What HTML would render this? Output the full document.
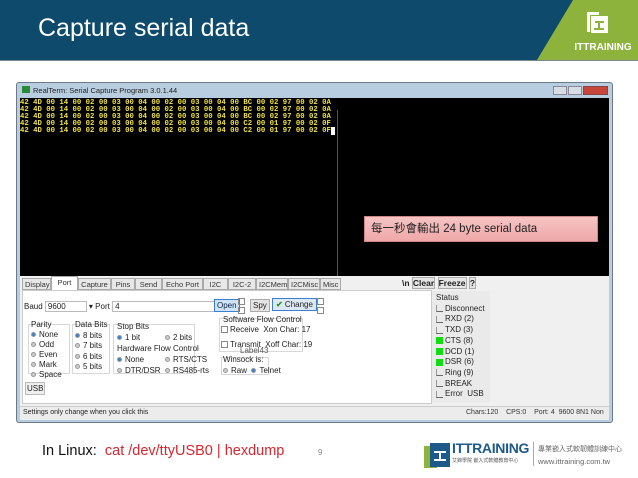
<!DOCTYPE html>
<html><head><meta charset="utf-8"><style>
*{margin:0;padding:0;box-sizing:border-box}
body{width:638px;height:478px;overflow:hidden;background:#fff;font-family:"Liberation Sans",sans-serif;position:relative}
.a{position:absolute}
.s{font-size:8px;color:#222;white-space:nowrap}
.hex{font-family:"Liberation Mono",monospace;font-weight:bold;font-size:7.3px;line-height:7px;color:#f0e040;white-space:pre}
.tab{position:absolute;top:278px;height:12px;font-size:7.5px;color:#333;border:1px solid #aaa;background:#e8e8e8;padding:1px 2px;white-space:nowrap;text-align:center;overflow:hidden}
.rb{display:inline-block;width:5px;height:5px;border-radius:50%;background:#ccc;border:1px solid #999;margin-right:3px;vertical-align:middle}
.rb.on{background:#3a7fd0}
.box{position:absolute;border:1px solid #d8d8d8}
.led{display:inline-block;width:7px;height:7px;border-bottom:1px solid #666;border-left:1px solid #999;margin-right:2px;vertical-align:middle}
.led.g{background:#11dd11;border:none}
</style></head><body>
<div class="a" style="left:0;top:0;width:638px;height:60px;background:#0e4a6b"></div>
<svg class="a" style="left:0;top:0" width="638" height="62"><polygon points="573,0 638,0 638,60 537,60" fill="#8db33d"/><line x1="0" y1="60.5" x2="638" y2="60.5" stroke="#7a8a95" stroke-width="1"/>
<g fill="#fff"><rect x="587" y="12" width="3" height="20"/><rect x="587" y="12" width="12" height="3"/><rect x="591" y="16" width="17" height="17"/></g>
<g fill="#8db33d"><rect x="595" y="21" width="9" height="2"/><rect x="598" y="21" width="2" height="8"/><rect x="594" y="28" width="10" height="2"/></g>
<text x="603" y="50" fill="#fff" font-family="Liberation Sans" font-weight="bold" font-size="10" text-anchor="middle">ITTRAINING</text></svg>
<div class="a" style="left:38px;top:14px;font-size:25px;color:#fff">Capture serial data</div>

<!-- window -->
<div class="a" style="left:16px;top:82px;width:597px;height:341px;background:#b8cde0;border:1px solid #6a7a8a;border-radius:3px"></div>
<div class="a s" style="left:33px;top:86px;font-size:7.5px;color:#222">RealTerm: Serial Capture Program 3.0.1.44</div>
<div class="a" style="left:22px;top:86px;width:8px;height:7px;background:#2a8a3a"></div>
<div class="a" style="left:553px;top:86px;width:14px;height:9px;background:#d8dde4;border:1px solid #889"></div>
<div class="a" style="left:568px;top:86px;width:14px;height:9px;background:#d8dde4;border:1px solid #889"></div>
<div class="a" style="left:583px;top:86px;width:25px;height:9px;background:#c8453a;border:1px solid #844"></div>
<div class="a" style="left:20px;top:98px;width:589px;height:178px;background:#000"></div>
<div class="a" style="left:337px;top:110px;width:1px;height:166px;background:#555"></div>
<div class="a hex" style="left:20px;top:100px">42 4D 00 14 00 02 00 03 00 04 00 02 00 03 00 04 00 BC 00 02 97 00 02 0A
42 4D 00 14 00 02 00 03 00 04 00 02 00 03 00 04 00 BC 00 02 97 00 02 0A
42 4D 00 14 00 02 00 03 00 04 00 02 00 03 00 04 00 BC 00 02 97 00 02 0A
42 4D 00 14 00 02 00 03 00 04 00 02 00 03 00 04 00 C2 00 01 97 00 02 0F
42 4D 00 14 00 02 00 03 00 04 00 02 00 03 00 04 00 C2 00 01 97 00 02 0F<span style="background:#fff"> </span></div>
<div class="a" style="left:364px;top:216px;width:234px;height:26px;background:linear-gradient(#f6c4c4,#f0a8a8);border:1px solid #c88;font-size:11.5px;line-height:24px;padding-left:6px;color:#222;font-family:'Liberation Sans','Noto Sans CJK TC',sans-serif">每一秒會輸出 24 byte serial data</div>

<div class="a" style="left:20px;top:276px;width:589px;height:131px;background:#f0f0f0"></div>
<div class="tab" style="left:22px;width:29px">Display</div>
<div class="tab" style="left:51px;width:27px;background:#fff;top:276px;height:15px;border-bottom:none">Port</div>
<div class="tab" style="left:78px;width:33px">Capture</div>
<div class="tab" style="left:111px;width:24px">Pins</div>
<div class="tab" style="left:135px;width:27px">Send</div>
<div class="tab" style="left:162px;width:41px">Echo Port</div>
<div class="tab" style="left:203px;width:25px">I2C</div>
<div class="tab" style="left:228px;width:28px">I2C-2</div>
<div class="tab" style="left:256px;width:32px">I2CMem</div>
<div class="tab" style="left:288px;width:32px">I2CMisc</div>
<div class="tab" style="left:320px;width:21px">Misc</div>
<div class="a s" style="left:402px;top:278px;font-weight:bold;font-size:8.5px">\n <span style="border:1px solid #aaa;background:#e4e4e4">Clear</span> <span style="border:1px solid #aaa;background:#e4e4e4">Freeze</span> <span style="border:1px solid #aaa;background:#e4e4e4">?</span></div>
<div class="a" style="left:22px;top:290px;width:410px;height:114px;background:#fff;border:1px solid #ccc"></div>

<div class="a s" style="left:24px;top:301px">Baud <span style="border:1px solid #bbb;padding:0 20px 0 2px">9600</span> ▾ Port <span style="border:1px solid #bbb;display:inline-block;width:118px;padding-left:2px">4</span></div>
<div class="a s" style="left:214px;top:299px;border:1px solid #3a7fd0;background:#cfe4f8;padding:1px 2px;color:#124">Open</div>
<div class="a" style="left:238px;top:298px;width:7px;height:7px;border:1px solid #888"></div>
<div class="a" style="left:238px;top:307px;width:7px;height:7px;border:1px solid #888"></div>
<div class="a s" style="left:250px;top:299px;border:1px solid #aaa;background:#e4e4e4;padding:1px 2px">Spy</div>
<div class="a s" style="left:272px;top:298px;border:1px solid #3a7fd0;background:#dde8f2;padding:1px 3px"><span style="color:#1a9a1a;font-weight:bold">✔</span> Change</div>
<div class="a" style="left:317px;top:298px;width:7px;height:7px;border:1px solid #888"></div>
<div class="a" style="left:317px;top:307px;width:7px;height:7px;border:1px solid #888"></div>

<div class="box" style="left:28px;top:324px;width:42px;height:50px"></div>
<div class="a s" style="left:31px;top:320px;line-height:10px">Parity<br><span class="rb on"></span>None<br><span class="rb"></span>Odd<br><span class="rb"></span>Even<br><span class="rb"></span>Mark<br><span class="rb"></span>Space</div>
<div class="box" style="left:72px;top:324px;width:38px;height:50px"></div>
<div class="a s" style="left:75px;top:320px;line-height:10.5px">Data Bits<br><span class="rb on"></span>8 bits<br><span class="rb"></span>7 bits<br><span class="rb"></span>6 bits<br><span class="rb"></span>5 bits</div>
<div class="box" style="left:113px;top:324px;width:82px;height:50px"></div>
<div class="a s" style="left:117px;top:321px;line-height:11px">Stop Bits<br><span class="rb on"></span>1 bit<br>Hardware Flow Control<br><span class="rb on"></span>None<br><span class="rb"></span>DTR/DSR</div>
<div class="a s" style="left:165px;top:332px;line-height:11px"><span class="rb"></span>2 bits<br><br><span class="rb"></span>RTS/CTS<br><span class="rb"></span>RS485-rts</div>
<div class="box" style="left:219px;top:318px;width:84px;height:34px"></div>
<div class="a s" style="left:223px;top:315px">Software Flow Control</div>
<div class="a s" style="left:221px;top:325px"><span class="led" style="border:1px solid #888"></span>Receive &nbsp;Xon Char: 17</div>
<div class="a s" style="left:221px;top:340px"><span class="led" style="border:1px solid #888"></span>Transmit &nbsp;Xoff Char: 19</div>
<div class="a s" style="left:240px;top:346px;color:#555">Label43</div>
<div class="box" style="left:221px;top:357px;width:48px;height:18px"></div>
<div class="a s" style="left:223px;top:354px;line-height:11px">Winsock is:<br><span class="rb"></span>Raw &nbsp;<span class="rb on"></span>Telnet</div>
<div class="a s" style="left:25px;top:382px;border:1px solid #bbb;background:#eee;padding:1px 1px">USB</div>

<div class="a" style="left:432px;top:291px;width:58px;height:112px;background:#eaeaea"></div>
<div class="a s" style="left:436px;top:293px;line-height:10.7px">Status<br><span class="led"></span>Disconnect<br><span class="led"></span>RXD (2)<br><span class="led"></span>TXD (3)<br><span class="led g"></span>CTS (8)<br><span class="led g"></span>DCD (1)<br><span class="led g"></span>DSR (6)<br><span class="led"></span>Ring (9)<br><span class="led"></span>BREAK<br><span class="led"></span>Error &nbsp;USB</div>

<div class="a" style="left:20px;top:406px;width:589px;height:14px;background:#ececec;border-top:1px solid #ccc"></div>
<div class="a s" style="left:23px;top:409px;font-size:7px">Settings only change when you click this</div>
<div class="a s" style="left:466px;top:409px;font-size:7px;color:#333">Chars:120 &nbsp;&nbsp; CPS:0 &nbsp;&nbsp; Port: 4 &nbsp;9600 8N1 Non</div>

<div class="a" style="left:42px;top:443px;font-size:14.5px;color:#111">In Linux: &nbsp;<span style="color:#d6262f">cat /dev/ttyUSB0 | hexdump</span></div>
<div class="a" style="left:318px;top:448px;font-size:8px;color:#888">9</div>
<svg class="a" style="left:424px;top:440px" width="34" height="30"><rect x="0" y="6" width="13" height="22" fill="#8db33d"/><rect x="6" y="3" width="20" height="24" fill="#1c5a8a"/><rect x="10" y="11" width="12" height="2" fill="#fff"/><rect x="15" y="11" width="2" height="9" fill="#fff"/><rect x="10" y="19" width="12" height="2" fill="#fff"/></svg>
<div class="a" style="left:452px;top:440px;font-size:14px;font-weight:bold;color:#1c5a8a;letter-spacing:-.3px">ITTRAINING</div>
<div class="a" style="left:452px;top:457px;font-size:5px;color:#555;font-family:'Liberation Sans','Noto Sans CJK TC',sans-serif">艾鍗學院 嵌入式軟體教育中心</div>
<div class="a" style="left:533px;top:442px;width:1px;height:24px;background:#aaa"></div>
<div class="a" style="left:538px;top:444px;font-size:7px;color:#666;font-family:'Liberation Sans','Noto Sans CJK TC',sans-serif">專業嵌入式軟韌體訓練中心</div>
<div class="a" style="left:538px;top:457px;font-size:7.5px;color:#666">www.ittraining.com.tw</div>
</body></html>
